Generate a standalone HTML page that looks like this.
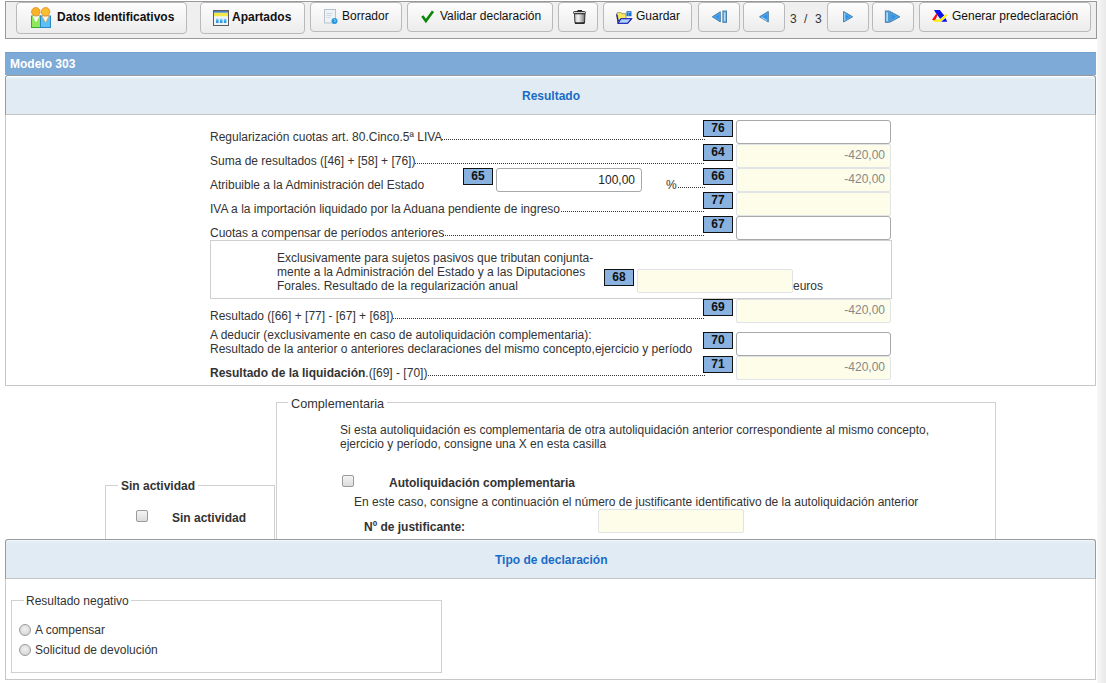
<!DOCTYPE html>
<html><head><meta charset="utf-8">
<style>
*{box-sizing:border-box}
html,body{margin:0;padding:0;width:1106px;height:683px;overflow:hidden;background:#fff;font-family:"Liberation Sans",sans-serif;font-size:12px;color:#333}
.a{position:absolute}
.t{position:absolute;line-height:14px;white-space:nowrap}
#tb{position:absolute;left:5px;top:1px;width:1092px;height:38px;background:#efefef;border:1px solid #999}
.btn{position:absolute;top:2px;height:30px;border:1px solid #b9b9b9;border-radius:4px;background:linear-gradient(#fdfdfd,#ececec)}
.btn.tall{height:32px}
.btxt{position:absolute;line-height:14px;white-space:nowrap;color:#111}
.sec{position:absolute;left:5px;width:1091px;border:1px solid #c7c7c7;border-top:none;background:#fff}
.hdr{position:absolute;left:5px;width:1091px;background:#e0ebf3;border:1px solid #9a9a9a;border-bottom:1px solid #c4c4c4;border-radius:3px 3px 0 0}
.htxt{position:absolute;color:#1a6bc6;font-weight:bold;line-height:14px;white-space:nowrap}
.bd{position:absolute;width:30px;height:17px;border:1px solid #111;background:#8ab2e0;color:#111;font-weight:bold;text-align:center;line-height:14px}
.in{position:absolute;width:155px;height:24px;border:1px solid #a8a8a8;border-radius:3px;background:#fff}
.ro{position:absolute;width:155px;height:24px;border:1px solid #e1e4e6;border-radius:2px;background:#fdfdea;color:#888;text-align:right;padding-right:5px;line-height:21px}
.dot{position:absolute;height:1px;background-image:linear-gradient(to right,#333 50%,transparent 50%);background-size:2px 1px;background-repeat:repeat-x}
.fs{position:absolute;border:1px solid #d0d0d0}
.leg{position:absolute;background:#fff;line-height:14px;white-space:nowrap;padding:0 3px}
.cb{position:absolute;width:12px;height:12px;border:1px solid #9a9a9a;border-radius:2px;background:linear-gradient(#f4f4f4,#dcdcdc)}
.rd{position:absolute;width:12px;height:12px;border:1px solid #9a9a9a;border-radius:50%;background:radial-gradient(circle at 50% 40%,#f0f0f0,#d0d0d0)}
</style></head><body>

<!-- toolbar -->
<div id="tb"></div>
<div class="btn tall" style="left:16px;width:171px"></div>
<div class="btn tall" style="left:200px;width:105px"></div>
<div class="btn" style="left:310px;width:92px"></div>
<div class="btn" style="left:407px;width:146px"></div>
<div class="btn" style="left:558px;width:40px"></div>
<div class="btn" style="left:603px;width:89px"></div>
<div class="btn" style="left:698px;width:42px"></div>
<div class="btn" style="left:743px;width:42px"></div>
<div class="btn" style="left:827px;width:42px"></div>
<div class="btn" style="left:872px;width:42px"></div>
<div class="btn" style="left:919px;width:172px"></div>

<div class="btxt" style="left:57px;top:10px;font-weight:bold">Datos Identificativos</div>
<div class="btxt" style="left:232px;top:10px;font-weight:bold">Apartados</div>
<div class="btxt" style="left:342px;top:9px">Borrador</div>
<div class="btxt" style="left:440px;top:9px">Validar declaración</div>
<div class="btxt" style="left:636px;top:9px">Guardar</div>
<div class="btxt" style="left:790px;top:12px;color:#333">3</div><div class="btxt" style="left:804px;top:12px;color:#333">/</div><div class="btxt" style="left:815px;top:12px;color:#333">3</div>
<div class="btxt" style="left:952px;top:9px">Generar predeclaración</div>


<svg class="a" style="left:0;top:0" width="1106" height="40" viewBox="0 0 1106 40">
<defs>
<linearGradient id="gb" x1="0" y1="0" x2="1" y2="1"><stop offset="0" stop-color="#c8ecff"/><stop offset="0.5" stop-color="#56acec"/><stop offset="1" stop-color="#a8dcfa"/></linearGradient>
<linearGradient id="gt" x1="0" y1="0" x2="1" y2="0"><stop offset="0" stop-color="#bdbdbd"/><stop offset="0.35" stop-color="#f4f4f4"/><stop offset="0.6" stop-color="#c8c8c8"/><stop offset="1" stop-color="#6e6e6e"/></linearGradient>
</defs>
<!-- Datos identificativos icon -->
<rect x="31.5" y="16" width="9" height="11.5" fill="#8ee85a" stroke="#3aaa2a" stroke-width="1"/>
<rect x="40.5" y="16" width="10" height="11.5" fill="#5cc0f2" stroke="#2a88c8" stroke-width="1"/>
<path d="M32.5 16 L36 22.5 L39.5 16Z" fill="#fff" opacity="0.9"/>
<path d="M42 16 L45.6 22.5 L49 16Z" fill="#fff8e8" stroke="#e8a050" stroke-width="0.6"/>
<circle cx="35.8" cy="11.8" r="4.2" fill="#f8b428" stroke="#e88a20" stroke-width="0.9"/>
<circle cx="45.6" cy="11.8" r="4.2" fill="#f8c030" stroke="#e88a20" stroke-width="0.9"/>
<!-- Apartados icon -->
<linearGradient id="gd" x1="0" y1="0" x2="0" y2="1"><stop offset="0" stop-color="#d8f2ff"/><stop offset="0.55" stop-color="#3aa6ec"/><stop offset="1" stop-color="#2a8ee0"/></linearGradient>
<rect x="213.5" y="10.5" width="15" height="15" fill="#eef3f6" stroke="#5c5c5c" stroke-width="1"/>
<rect x="214" y="11" width="14" height="1.8" fill="#4a82cc"/>
<rect x="214" y="12.8" width="14" height="3.4" fill="#f2e84a"/>
<path d="M216 23 L216 19 Q217.3 16.8 218.6 19 L218.6 23Z" fill="url(#gd)"/>
<path d="M219.9 23 L219.9 19 Q221.2 16.8 222.5 19 L222.5 23Z" fill="url(#gd)"/>
<path d="M223.8 23 L223.8 19 Q225.1 16.8 226.4 19 L226.4 23Z" fill="url(#gd)"/>
<!-- Borrador icon -->
<rect x="324.5" y="9.5" width="11" height="13.5" fill="#eef3f8" stroke="#b8c2cc" stroke-width="1"/>
<path d="M326.5 13.5h6M326.5 15.5h5M326.5 17.5h4" stroke="#c8d0d8" stroke-width="0.8"/>
<circle cx="334.5" cy="21" r="3" fill="#2a98e0"/>
<path d="M334 19 q1.5 1 1 3" stroke="#bfe6ff" stroke-width="0.8" fill="none"/>
<!-- check -->
<path d="M422.3 16 L425.9 21 L433 11.3" stroke="#0b870b" stroke-width="2.7" fill="none" stroke-linejoin="miter" stroke-linecap="butt"/>
<!-- trash -->
<rect x="577.5" y="10" width="4.5" height="1.8" fill="#222"/>
<rect x="573.5" y="11.5" width="12" height="2.2" rx="1" fill="#cfcfcf" stroke="#222" stroke-width="0.9"/>
<path d="M574.5 13.8 L575 23 L584.5 23 L585 13.8Z" fill="url(#gt)" stroke="#222" stroke-width="0.9"/>
<rect x="575" y="22.6" width="9.5" height="1.2" fill="#111"/>
<!-- Guardar folder -->
<path d="M616.5 14.5 L617 12.8 L620.5 12.5 L622 13.6 L626 13.8 L626 19 L618 22.5Z" fill="#f8e860" stroke="#8a7a4a" stroke-width="0.7"/>
<rect x="626.5" y="11.2" width="5" height="5" fill="#1a70c8"/>
<path d="M627.5 12.5h3M628.5 13.5v2" stroke="#9ad0ff" stroke-width="0.7"/>
<path d="M616.8 14.5 L618 23.2 L627.8 23.2 L631.5 18.8 L621 18.8 L618.5 21Z" fill="#ffe84a" stroke="#1a2ab0" stroke-width="1"/>
<path d="M618 23.2 L621 18.8 L631.5 18.8 L627.8 23.2Z" fill="#a8d4f8" stroke="#1a1ab8" stroke-width="1.1"/>
<!-- nav first -->
<path d="M712.3 16.8 L720.3 11.8 L720.3 21.9Z" fill="#48a6ee" stroke="#4d7fa8" stroke-width="1"/>
<path d="M715.5 16.8 L718.8 14.7 L718.8 19Z" fill="#2f8fe6"/>
<rect x="722.9" y="11" width="3.6" height="11.3" fill="#5ab4f2" stroke="#4d7fa8" stroke-width="1"/>
<rect x="724" y="12.5" width="1.3" height="8.5" fill="#b4e4fc"/>
<!-- prev -->
<path d="M759.6 16.8 L768.3 11.5 L768.3 22Z" fill="#48a6ee" stroke="#4d7fa8" stroke-width="1"/>
<path d="M763 16.8 L766.8 14.4 L766.8 19.2Z" fill="#2f8fe6"/>
<path d="M761.5 17.2 L767 20.6" stroke="#bfeaff" stroke-width="0.8"/>
<!-- next -->
<path d="M852.6 16.8 L843.6 11.5 L843.6 22Z" fill="#48a6ee" stroke="#4d7fa8" stroke-width="1"/>
<path d="M849.2 16.8 L845 14.4 L845 19.2Z" fill="#2f8fe6"/>
<path d="M844.8 12.8 L844.8 20.5" stroke="#bfeaff" stroke-width="0.8"/>
<!-- last -->
<rect x="885.4" y="11" width="3.6" height="11.3" fill="#5ab4f2" stroke="#4d7fa8" stroke-width="1"/>
<rect x="886.5" y="12.5" width="1.3" height="8.5" fill="#b4e4fc"/>
<path d="M899.8 16.8 L889.9 11.4 L889.9 22.2Z" fill="#48a6ee" stroke="#4d7fa8" stroke-width="1"/>
<path d="M896 16.8 L891.5 14.3 L891.5 19.3Z" fill="#2f8fe6"/>
<!-- AEAT logo -->
<path d="M934 10 L939.8 10 L944.2 15.6 L940.3 19 L937 14.5 L935.5 12.5Z" fill="#0a10e8"/>
<path d="M932 19.8 L935 20.8 L937.6 15 L936.2 13.8Z" fill="#ff0a0a"/>
<path d="M933.8 21.8 L940.5 21.8 L947.2 15.6 L946.2 14 L939.5 19.5 L934.8 19.5Z" fill="#ffee00"/>
<path d="M941.2 21.8 L945.6 18 L947.2 21.8Z" fill="#0a10e8"/>
</svg>

<!-- Modelo bar -->
<div class="a" style="left:5px;top:52px;width:1091px;height:23px;background:#7eaad8;border-top:1px solid #74a0d0"></div>
<div class="t" style="left:10px;top:57px;color:#fff;font-weight:bold">Modelo 303</div>

<!-- Resultado section -->
<div class="sec" style="top:114px;height:272px"></div>
<div class="hdr" style="top:75px;height:40px;box-shadow:inset 0 1px 0 #fff,inset 0 3px 0 #e4f2fc,inset 0 4px 0 #e4e8ea"></div>
<div class="htxt" style="left:522px;top:89px">Resultado</div>

<div class="t" style="left:210px;top:130px;">Regularización cuotas art. 80.Cinco.5ª LIVA</div>
<div class="dot" style="left:442px;top:139px;width:263px"></div>
<div class="bd" style="left:703px;top:120px">76</div>
<div class="in" style="left:736px;top:120px"></div>
<div class="t" style="left:210px;top:154px;">Suma de resultados ([46] + [58] + [76])</div>
<div class="dot" style="left:415px;top:163px;width:290px"></div>
<div class="bd" style="left:703px;top:144px">64</div>
<div class="ro" style="left:736px;top:144px">-420,00</div>
<div class="t" style="left:210px;top:178px;">Atribuible a la Administración del Estado</div>
<div class="bd" style="left:703px;top:168px">66</div>
<div class="ro" style="left:736px;top:168px">-420,00</div>
<div class="t" style="left:210px;top:202px;">IVA a la importación liquidado por la Aduana pendiente de ingreso</div>
<div class="dot" style="left:561px;top:211px;width:144px"></div>
<div class="bd" style="left:703px;top:192px">77</div>
<div class="ro" style="left:736px;top:192px"></div>
<div class="t" style="left:210px;top:226px;">Cuotas a compensar de períodos anteriores</div>
<div class="dot" style="left:443px;top:235px;width:262px"></div>
<div class="bd" style="left:703px;top:216px">67</div>
<div class="in" style="left:736px;top:216px"></div>
<div class="t" style="left:210px;top:309px;">Resultado ([66] + [77] - [67] + [68])</div>
<div class="dot" style="left:393px;top:318px;width:312px"></div>
<div class="bd" style="left:703px;top:299px">69</div>
<div class="ro" style="left:736px;top:299px">-420,00</div>
<div class="bd" style="left:703px;top:332px">70</div>
<div class="in" style="left:736px;top:332px"></div>
<div class="dot" style="left:428px;top:375px;width:277px"></div>
<div class="bd" style="left:703px;top:356px">71</div>
<div class="ro" style="left:736px;top:356px">-420,00</div>
<div class="bd" style="left:463px;top:168px">65</div>
<div class="in" style="left:496px;top:168px;width:146px;text-align:right;padding-right:6px;line-height:22px;color:#222">100,00</div>
<div class="t" style="left:666px;top:178px;">%</div>
<div class="dot" style="left:678px;top:187px;width:27px"></div>
<div class="a" style="left:210px;top:240px;width:682px;height:59px;border:1px solid #cfcfcf"></div>
<div class="t" style="left:277px;top:252px;line-height:13.8px">Exclusivamente para sujetos pasivos que tributan conjunta-<br>mente a la Administración del Estado y a las Diputaciones<br>Forales. Resultado de la regularización anual</div>
<div class="bd" style="left:604px;top:269px">68</div>
<div class="ro" style="left:637px;top:269px;width:156px"></div>
<div class="t" style="left:793px;top:279px;">euros</div>
<div class="t" style="left:210px;top:328px;">A deducir (exclusivamente en caso de autoliquidación complementaria):</div>
<div class="t" style="left:210px;top:342px;">Resultado de la anterior o anteriores declaraciones del mismo concepto,ejercicio y período</div>
<div class="t" style="left:210px;top:366px"><b>Resultado de la liquidación</b>.([69] - [70])</div>


<!-- Complementaria -->
<div class="fs" style="left:276px;top:402px;width:720px;height:150px"></div>
<div class="leg" style="left:288px;top:397px;font-size:12.7px">Complementaria</div>
<div class="t" style="left:340px;top:424px;line-height:13.5px">Si esta autoliquidación es complementaria de otra autoliquidación anterior correspondiente al mismo concepto,<br>ejercicio y período, consigne una X en esta casilla</div>
<div class="cb" style="left:342px;top:475px"></div>
<div class="t" style="left:389px;top:476px;font-weight:bold">Autoliquidación complementaria</div>
<div class="t" style="left:354px;top:495px">En este caso, consigne a continuación el número de justificante identificativo de la autoliquidación anterior</div>
<div class="t" style="left:364px;top:520px;font-weight:bold">Nº de justificante:</div>
<div class="ro" style="left:598px;top:509px;width:146px"></div>

<!-- Sin actividad -->
<div class="fs" style="left:105px;top:485px;width:170px;height:80px"></div>
<div class="leg" style="left:118px;top:479px;font-weight:bold">Sin actividad</div>
<div class="cb" style="left:136px;top:510px"></div>
<div class="t" style="left:172px;top:511px;font-weight:bold">Sin actividad</div>

<!-- Tipo de declaracion -->
<div class="sec" style="top:578px;height:102px"></div>
<div class="hdr" style="top:539px;height:40px;box-shadow:inset 0 1px 0 #f2f7fb,inset 0 3px 0 #e4eef5"></div>
<div class="htxt" style="left:495px;top:553px">Tipo de declaración</div>
<div class="fs" style="left:11px;top:600px;width:431px;height:73px"></div>
<div class="leg" style="left:24px;top:594px;padding:0 2px">Resultado negativo</div>
<div class="rd" style="left:19px;top:624px"></div>
<div class="t" style="left:35px;top:623px">A compensar</div>
<div class="rd" style="left:19px;top:644px"></div>
<div class="t" style="left:35px;top:643px">Solicitud de devolución</div>

<!-- scrollbar strip -->
<div class="a" style="left:1097px;top:0;width:9px;height:683px;background:linear-gradient(to right,#f7f7f7,#e9e9e9)"></div>

</body></html>
